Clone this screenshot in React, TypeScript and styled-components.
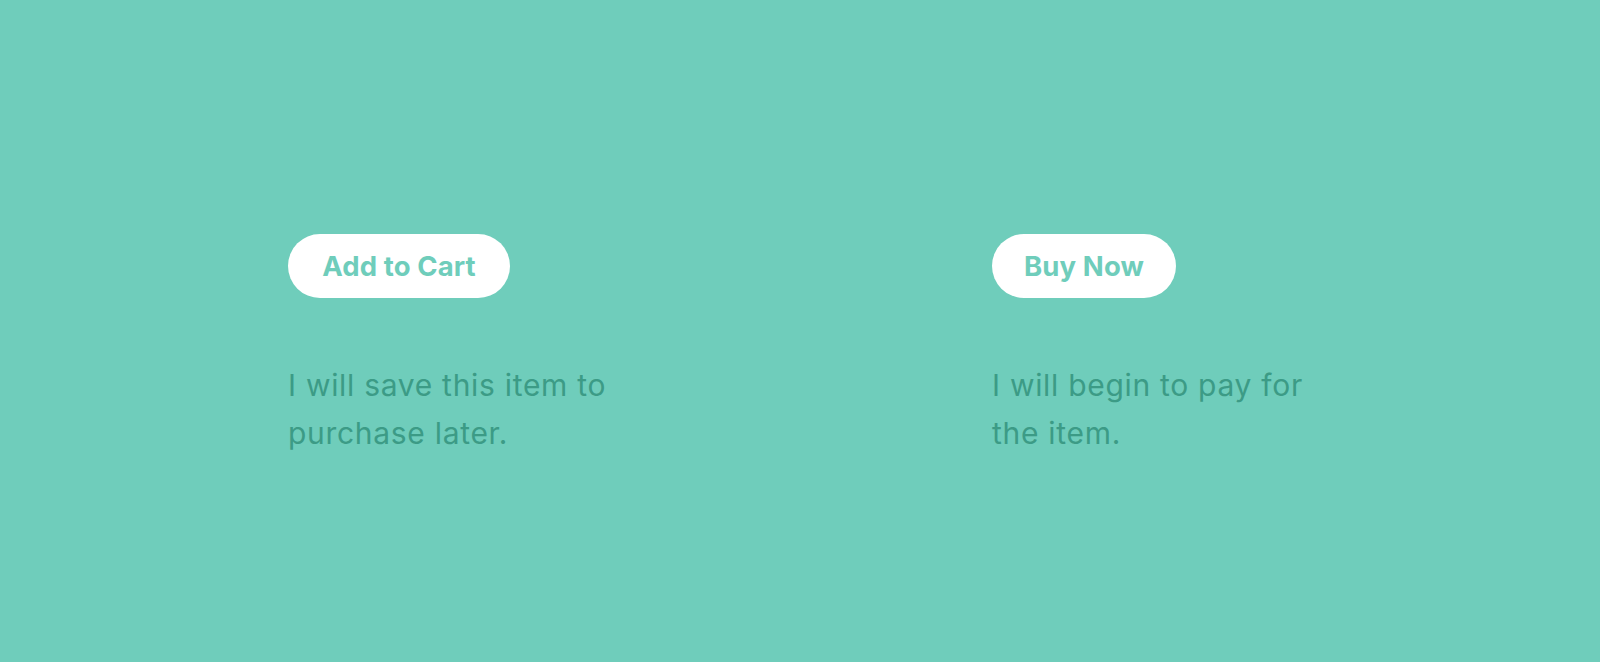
import React from "react";
import styled, { createGlobalStyle } from "styled-components";

const Global = createGlobalStyle`
  html, body { margin: 0; padding: 0; }
  body {
    background: #6fcdbb;
    font-family: Inter, "Noto Sans", sans-serif;
  }
`;

const Page = styled.main`
  width: 1600px;
  height: 662px;
  box-sizing: border-box;
  padding: 234px 288px 0;
  display: flex;
  justify-content: space-between;
  background: #6fcdbb;
`;

const Column = styled.section`
  width: 320px;
  display: flex;
  flex-direction: column;
  align-items: flex-start;
  gap: 63px;
`;

const Button = styled.button<{ $w: number }>`
  width: ${(p) => p.$w}px;
  height: 64px;
  border: none;
  border-radius: 32px;
  background: #ffffff;
  color: #6fcdbb;
  font-family: Inter, "Noto Sans", sans-serif;
  font-weight: 700;
  font-size: 27.5px;
  letter-spacing: 0.1px;
  padding: 0;
  cursor: pointer;
`;

const Note = styled.p`
  margin: 0;
  font-size: 30px;
  line-height: 48px;
  letter-spacing: 0.7px;
  color: #3c9b86;
  font-weight: 400;
`;

export default function App() {
  return (
    <>
      <Global />
      <Page>
        <Column>
          <Button $w={222}>Add to Cart</Button>
          <Note>I will save this item to purchase later.</Note>
        </Column>
        <Column>
          <Button $w={184}>Buy Now</Button>
          <Note>I will begin to pay for the item.</Note>
        </Column>
      </Page>
    </>
  );
}
